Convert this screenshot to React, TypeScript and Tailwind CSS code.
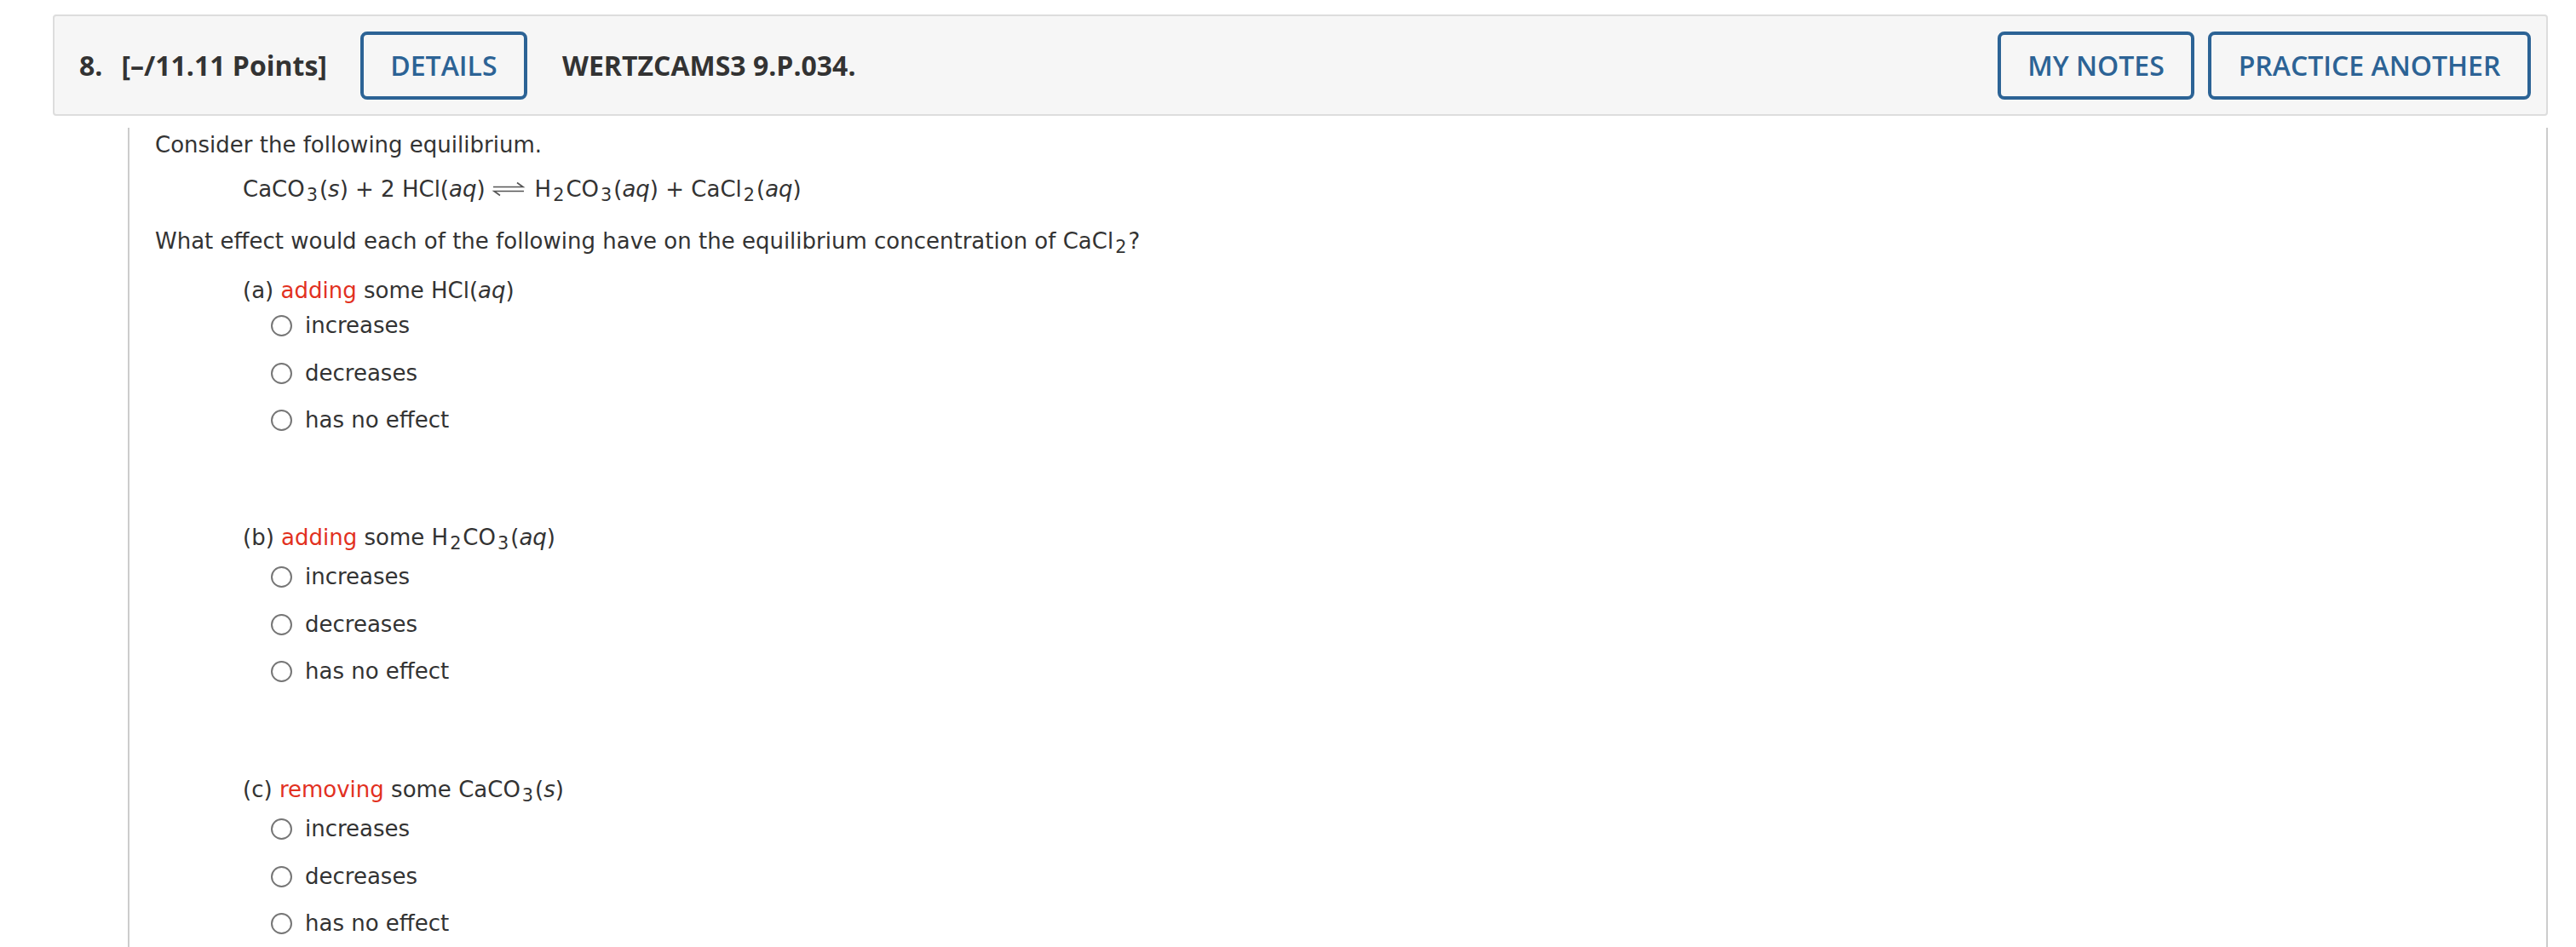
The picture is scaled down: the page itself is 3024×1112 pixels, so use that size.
import React from "react";

const body = { fontFamily: '"DejaVu Sans", Verdana, sans-serif' };

function Sub({ children }: { children: React.ReactNode }) {
  return <sub className="px-[2px] text-[80%]">{children}</sub>;
}

function Arrow() {
  return (
    <svg width="40" height="20" viewBox="0 0 40 20" className="mr-[11px] ml-[7px] inline-block align-middle">
      <path d="M2 7.5 H37 L30 2.5" fill="none" stroke="#555" strokeWidth="1.6" />
      <path d="M38 12.5 H3 L10 17.5" fill="none" stroke="#555" strokeWidth="1.6" />
    </svg>
  );
}

function Radio({ label, mt }: { label: string; mt: string }) {
  return (
    <div className={`flex h-[40px] items-center pl-[33px] ${mt}`}>
      <span className="box-border h-[25px] w-[25px] rounded-full border-2 border-[#767676] bg-white" />
      <span className="ml-[15px]">{label}</span>
    </div>
  );
}

function Part({
  letter,
  verb,
  children,
  mt,
  firstMt,
}: {
  letter: string;
  verb: string;
  children: React.ReactNode;
  mt: string;
  firstMt: string;
}) {
  return (
    <div className={`pl-[103px] ${mt}`}>
      <div className="flex h-[40px] items-center whitespace-pre">
        <span>({letter}) </span>
        <span className="text-[#e2311f]">{verb}</span>
        <span> some {children}</span>
      </div>
      <Radio label="increases" mt={firstMt} />
      <Radio label="decreases" mt="mt-[16px]" />
      <Radio label="has no effect" mt="mt-[15px]" />
    </div>
  );
}

export default function App() {
  const head = { fontFamily: '"Open Sans", "Liberation Sans", sans-serif' };
  return (
    <div className="min-h-[1112px] w-[3024px] bg-white pt-[17px]">
      <div
        style={head}
        className="mr-[33px] ml-[62px] flex h-[119px] items-center rounded-[4px] border-2 border-[#dddddd] bg-[#f6f6f6] pr-[18px] pl-[29px] text-[32px] text-[#333333]"
      >
        <span className="font-bold">8.</span>
        <span className="ml-[22px] font-bold">[–/11.11 Points]</span>
        <button className="ml-[39px] flex h-[80px] w-[196px] items-center justify-center rounded-[8px] border-4 border-[#2c6395] font-semibold text-[#2c6395]">
          DETAILS
        </button>
        <span className="ml-[41px] font-bold">WERTZCAMS3 9.P.034.</span>
        <div className="ml-auto flex gap-[16px]">
          <button className="flex h-[80px] w-[231px] items-center justify-center rounded-[8px] border-4 border-[#2c6395] font-semibold text-[#2c6395]">
            MY NOTES
          </button>
          <button className="flex h-[80px] w-[379px] items-center justify-center rounded-[8px] border-4 border-[#2c6395] font-semibold text-[#2c6395]">
            PRACTICE ANOTHER
          </button>
        </div>
      </div>

      <div
        style={body}
        className="mr-[33px] ml-[150px] border-x-2 border-[#cccccc] pb-[40px] pl-[30px] text-[26px] text-[#333333]"
      >
        <div className="mt-[14px] flex h-[40px] items-center">Consider the following equilibrium.</div>
        <div className="mt-[12px] flex h-[40px] items-center whitespace-pre pl-[103px]">
          <span>
            CaCO<Sub>3</Sub>(<i>s</i>) + 2 HCl(<i>aq</i>)
          </span>
          <Arrow />
          <span>
            H<Sub>2</Sub>CO<Sub>3</Sub>(<i>aq</i>) + CaCl<Sub>2</Sub>(<i>aq</i>)
          </span>
        </div>
        <div className="mt-[21px] flex h-[40px] items-center whitespace-pre">
          <span>
            What effect would each of the following have on the equilibrium concentration of CaCl<Sub>2</Sub>?
          </span>
        </div>
        <Part letter="a" verb="adding" mt="mt-[18px]" firstMt="mt-[1px]">
          HCl(<i>aq</i>)
        </Part>
        <Part letter="b" verb="adding" mt="mt-[98px]" firstMt="mt-[6px]">
          H<Sub>2</Sub>CO<Sub>3</Sub>(<i>aq</i>)
        </Part>
        <Part letter="c" verb="removing" mt="mt-[99px]" firstMt="mt-[6px]">
          CaCO<Sub>3</Sub>(<i>s</i>)
        </Part>
      </div>
    </div>
  );
}
